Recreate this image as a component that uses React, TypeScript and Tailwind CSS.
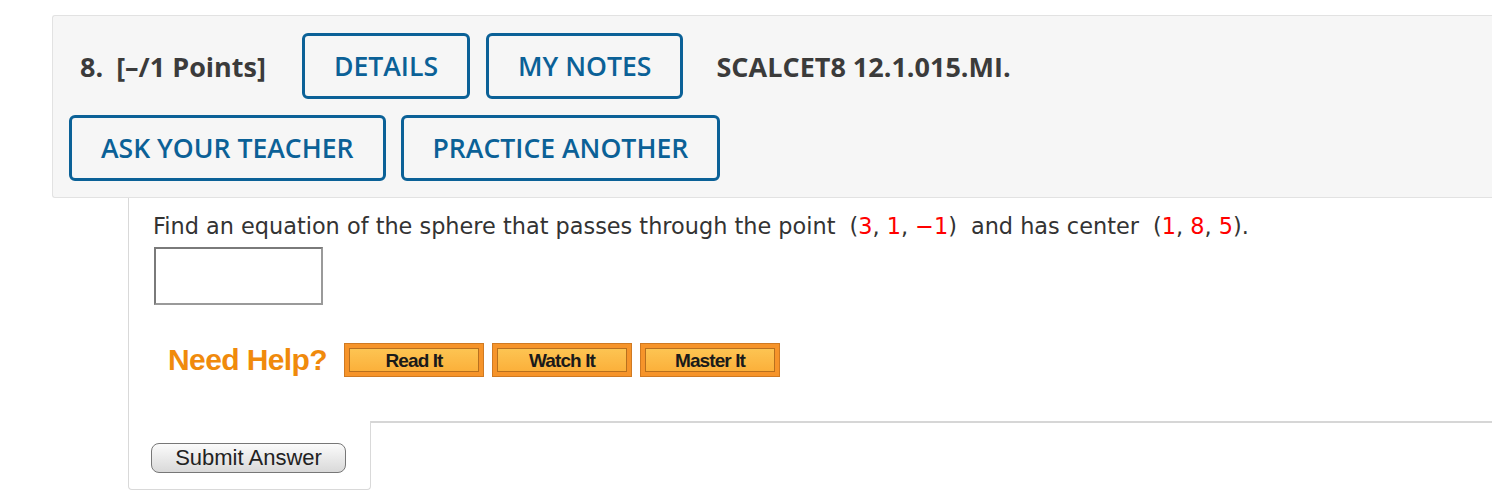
import React from 'react';

const sans = { fontFamily: '"Open Sans", "Noto Sans", sans-serif' };
const verdana = { fontFamily: '"DejaVu Sans", Verdana, sans-serif' };
const arial = { fontFamily: '"Liberation Sans", Arial, sans-serif' };

function OutlineButton({ label }: { label: string }) {
  return (
    <button
      style={sans}
      className="h-[66px] px-[29px] pt-[2px] rounded-[6px] border-[3px] border-[#0b6197] bg-transparent text-[26.6px] font-semibold text-[#0b6197]"
    >
      {label}
    </button>
  );
}

function HelpButton({ label }: { label: string }) {
  return (
    <button className="w-[140px] h-[34px] p-[4px] border border-[#d07a22] bg-[#f6942a]">
      <span
        style={arial}
        className="flex h-full w-full items-center justify-center border border-[#b8701e] bg-gradient-to-b from-[#fdc452] to-[#fbb03a] pt-[2px] text-[19px] font-bold text-[#1a1a1a] tracking-[-0.9px]"
      >
        {label}
      </span>
    </button>
  );
}

const Red = ({ children }: { children: React.ReactNode }) => <span className="text-[#f00]">{children}</span>;

export default function App() {
  return (
    <div className="min-h-[495px] w-[1492px] overflow-hidden bg-white pt-[15px] pl-[52px]">
      <div className="w-[1460px] rounded-l-[3px] border border-r-0 border-[#e2e2e2] bg-[#f6f6f6] pt-[17px] pb-[16px] pl-[16px]">
        <div className="flex items-center">
          <div style={sans} className="ml-[11px] mr-[36px] pt-[2px] text-[27px] font-bold text-[#3b3b3b]">
            8.<span className="ml-[13px]">[–/1 Points]</span>
          </div>
          <div className="flex gap-[16px]">
            <OutlineButton label="DETAILS" />
            <OutlineButton label="MY NOTES" />
          </div>
          <div style={sans} className="ml-[33px] pt-[2px] text-[27px] font-bold text-[#3b3b3b]">
            SCALCET8 12.1.015.MI.
          </div>
        </div>
        <div className="mt-[16px] flex gap-[15px]">
          <OutlineButton label="ASK YOUR TEACHER" />
          <OutlineButton label="PRACTICE ANOTHER" />
        </div>
      </div>

      <div className="ml-[76px]">
        <div className="h-[223px] border-l border-[#d9d9d9] pl-[24px] pt-[14px]">
          <p style={verdana} className="text-[22.4px] leading-[28px] text-[#333]">
            Find an equation of the sphere that passes through the point
            <span className="ml-[14px]">(</span>
            <Red>3</Red>, <Red>1</Red>, <Red>−1</Red>)
            <span className="ml-[14px]">and has center</span>
            <span className="ml-[14px]">(</span>
            <Red>1</Red>, <Red>8</Red>, <Red>5</Red>).
          </p>
          <div className="mt-[7px] ml-[1px] h-[58px] w-[169px] border-2 border-t-[#7a7a7a] border-l-[#7a7a7a] border-b-[#9a9a9a] border-r-[#9a9a9a] bg-white" />
          <div className="mt-[38px] ml-[15px] flex items-center">
            <span style={arial} className="mr-[17px] text-[30px] leading-none font-bold tracking-[-0.6px] text-[#f08a0c]">
              Need Help?
            </span>
            <div className="flex gap-[8px]">
              <HelpButton label="Read It" />
              <HelpButton label="Watch It" />
              <HelpButton label="Master It" />
            </div>
          </div>
        </div>
        <div className="flex">
          <div className="h-[69px] w-[243px] rounded-b-[4px] border border-t-0 border-[#d9d9d9] pl-[22px] pt-[22px]">
            <button
              style={arial}
              className="h-[30px] w-[195px] rounded-[8px] border border-[#777] bg-gradient-to-b from-[#fbfbfb] to-[#d9d9d9] text-[22px] leading-none text-[#222]"
            >
              Submit Answer
            </button>
          </div>
          <div className="flex-1 border-t-2 border-[#d6d6d6]" />
        </div>
      </div>
    </div>
  );
}
